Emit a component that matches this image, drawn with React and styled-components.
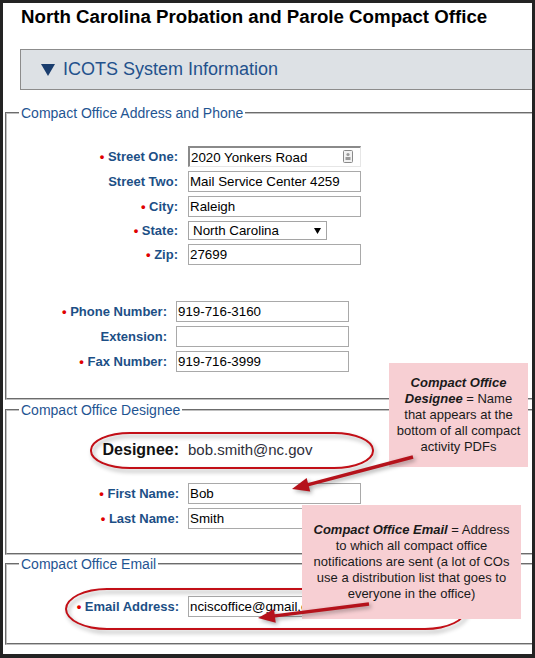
import styled, { createGlobalStyle } from 'styled-components';

const GlobalStyle = createGlobalStyle`
    body {
        margin: 0;
        background: #fff;
        font-family: "Liberation Sans", Arial, sans-serif;
    }
`;

const Frame = styled.div`
    position: relative;
    width: 535px;
    height: 658px;
    box-sizing: border-box;
    border: solid #232323;
    border-width: 3px 3px 4px 3px;
    background: #fff;
    overflow: hidden;
`;

const Page = styled.div`
    width: 600px;
    padding-top: 3px;
`;

const Title = styled.h1`
    margin: 0 0 0 18px;
    font-size: 18.7px;
    line-height: 22px;
    font-weight: bold;
    color: #000;
`;

const SectionBar = styled.div`
    margin: 21px 0 0 17px;
    height: 39px;
    border: 1px solid #8c8c8c;
    background: #dde1e5;
    display: flex;
    align-items: center;
    gap: 8px;
    padding-left: 20px;
    font-size: 18px;
    color: #23518c;
`;

const Group = styled.fieldset`
    margin: ${props => props.$gap}px 0 0 2px;
    padding: ${props => props.$padTop}px 12px ${props => props.$padBottom}px;
    border: 2px groove #c0c0c0;
    min-width: 0;
`;

const Legend = styled.legend`
    padding: 0 2px;
    font-size: 14px;
    line-height: 16px;
    color: #1f5592;
`;

const FormGrid = styled.div`
    display: grid;
    grid-template-columns: ${props => props.$labelWidth}px 173px;
    column-gap: ${props => props.$gap}px;
    row-gap: 4px;
    align-items: center;
    margin-top: ${props => props.$top || 0}px;
`;

const Label = styled.label`
    text-align: right;
    font-size: 13px;
    line-height: 15px;
    font-weight: bold;
    color: #1c4f86;
    white-space: nowrap;
`;

const Bullet = styled.span`
    color: #e00000;
`;

const TextInput = styled.input`
    display: block;
    width: 173px;
    height: 21px;
    box-sizing: border-box;
    margin: 0;
    padding: 0 1px;
    border: 1px solid #a9a9a9;
    border-width: ${props => (props.$inset ? '2px 1px 1px 2px' : '1px')};
    border-color: ${props =>
        props.$inset ? '#8a8a8a #e6e6e6 #e6e6e6 #8a8a8a' : '#a9a9a9'};
    background: #fff;
    font-family: "Liberation Sans", Arial, sans-serif;
    font-size: 13.33px;
    color: #000;
    outline: none;
`;

const InputWrap = styled.div`
    position: relative;
    width: 173px;
`;

const FillIcon = styled.svg`
    position: absolute;
    right: 8px;
    top: 4px;
`;

const SelectWrap = styled.div`
    position: relative;
    width: 139px;
    height: 19px;
`;

const StateSelect = styled.select`
    appearance: none;
    width: 139px;
    height: 19px;
    box-sizing: border-box;
    margin: 0;
    padding: 0 0 0 4px;
    border: 1px solid #a5a5a5;
    border-radius: 0;
    background: #fff;
    font-family: "Liberation Sans", Arial, sans-serif;
    font-size: 13.33px;
    color: #000;
`;

const SelectArrow = styled.svg`
    position: absolute;
    right: 6px;
    top: 7px;
`;

const DesigneeRow = styled.div`
    display: grid;
    grid-template-columns: 160px auto;
    column-gap: 9px;
    align-items: baseline;
    height: 20px;
`;

const DesigneeLabel = styled.span`
    text-align: right;
    font-size: 16px;
    line-height: 20px;
    font-weight: bold;
    color: #111;
`;

const DesigneeValue = styled.span`
    font-size: 15px;
    line-height: 20px;
    color: #2e2e3a;
`;

/* annotation overlay, in whole-frame coordinates */
const Annotations = styled.div`
    position: absolute;
    top: -3px;
    left: -3px;
    width: 535px;
    height: 658px;
    pointer-events: none;
`;

const Ring = styled.div`
    position: absolute;
    left: ${props => props.$x}px;
    top: ${props => props.$y}px;
    width: ${props => props.$w}px;
    height: ${props => props.$h}px;
    box-sizing: border-box;
    border: 2.5px solid #c20f17;
    border-radius: ${props => props.$radius};
    filter: drop-shadow(2px 3px 2px rgba(0, 0, 0, 0.35));
`;

const Callout = styled.div`
    position: absolute;
    left: ${props => props.$x}px;
    top: ${props => props.$y}px;
    width: ${props => props.$w}px;
    height: ${props => props.$h}px;
    background: #f7cfd3;
    display: flex;
    align-items: center;
    justify-content: center;
    text-align: center;
    font-size: 13px;
    line-height: 16px;
    color: #1a1a1a;
`;

const Term = styled.b`
    font-style: italic;
`;

const ArrowLayer = styled.svg`
    position: absolute;
    top: 0;
    left: 0;
    filter: drop-shadow(2px 2px 2px rgba(0, 0, 0, 0.35));
`;

const Arrow = ({ from, to }) => {
    const dx = to[0] - from[0];
    const dy = to[1] - from[1];
    const len = Math.hypot(dx, dy);
    const ux = dx / len;
    const uy = dy / len;
    const bx = to[0] - ux * 17;
    const by = to[1] - uy * 17;
    const head = [
        [to[0], to[1]],
        [bx - uy * 7, by + ux * 7],
        [bx + uy * 7, by - ux * 7],
    ]
        .map(p => p.join(','))
        .join(' ');
    return (
        <g fill="#b5121b" stroke="#b5121b">
            <line
                x1={from[0]}
                y1={from[1]}
                x2={bx + ux * 2}
                y2={by + uy * 2}
                strokeWidth="3.5"
            />
            <polygon points={head} strokeWidth="0" />
        </g>
    );
};

const Field = ({ label, required, children }) => (
    <>
        <Label>
            {required && <Bullet>•</Bullet>}
            {required && ' '}
            {label}:
        </Label>
        {children}
    </>
);

function App() {
    return (
        <Frame>
            <GlobalStyle />
            <Page>
                <Title>North Carolina Probation and Parole Compact Office</Title>
                <SectionBar>
                    <svg width="14" height="12" viewBox="0 0 14 12">
                        <polygon points="0,0 14,0 7,12" fill="#1a3d6e" />
                    </svg>
                    ICOTS System Information
                </SectionBar>

                <Group $gap={15} $padTop={25} $padBottom={26}>
                    <Legend>Compact Office Address and Phone</Legend>
                    <FormGrid $labelWidth={159} $gap={10}>
                        <Field label="Street One" required>
                            <InputWrap>
                                <TextInput $inset defaultValue="2020 Yonkers Road" />
                                <FillIcon width="10" height="13" viewBox="0 0 10 13">
                                    <rect x="0.5" y="0.5" width="9" height="12" rx="1" fill="#f2f2f2" stroke="#8a8a8a" />
                                    <circle cx="5" cy="4.5" r="1.6" fill="#9a9a9a" />
                                    <rect x="2.5" y="7" width="5" height="3" fill="#9a9a9a" />
                                </FillIcon>
                            </InputWrap>
                        </Field>
                        <Field label="Street Two">
                            <TextInput defaultValue="Mail Service Center 4259" />
                        </Field>
                        <Field label="City" required>
                            <TextInput defaultValue="Raleigh" />
                        </Field>
                        <Field label="State" required>
                            <SelectWrap>
                                <StateSelect defaultValue="NC">
                                    <option value="NC">North Carolina</option>
                                </StateSelect>
                                <SelectArrow width="7" height="6" viewBox="0 0 7 6">
                                    <polygon points="0,0 7,0 3.5,6" fill="#000" />
                                </SelectArrow>
                            </SelectWrap>
                        </Field>
                        <Field label="Zip" required>
                            <TextInput defaultValue="27699" />
                        </Field>
                    </FormGrid>
                    <FormGrid $labelWidth={148} $gap={9} $top={36}>
                        <Field label="Phone Number" required>
                            <TextInput defaultValue="919-716-3160" />
                        </Field>
                        <Field label="Extension">
                            <TextInput defaultValue="" />
                        </Field>
                        <Field label="Fax Number" required>
                            <TextInput defaultValue="919-716-3999" />
                        </Field>
                    </FormGrid>
                </Group>

                <Group $gap={2} $padTop={22} $padBottom={24}>
                    <Legend>Compact Office Designee</Legend>
                    <DesigneeRow>
                        <DesigneeLabel>Designee:</DesigneeLabel>
                        <DesigneeValue>bob.smith@nc.gov</DesigneeValue>
                    </DesigneeRow>
                    <FormGrid $labelWidth={160} $gap={9} $top={23}>
                        <Field label="First Name" required>
                            <TextInput defaultValue="Bob" />
                        </Field>
                        <Field label="Last Name" required>
                            <TextInput defaultValue="Smith" />
                        </Field>
                    </FormGrid>
                </Group>

                <Group $gap={1} $padTop={24} $padBottom={26}>
                    <Legend>Compact Office Email</Legend>
                    <FormGrid $labelWidth={160} $gap={9}>
                        <Field label="Email Address" required>
                            <TextInput defaultValue="nciscoffice@gmail.com" />
                        </Field>
                    </FormGrid>
                </Group>
            </Page>

            <Annotations>
                <Ring $x={90} $y={432} $w={284} $h={37} $radius="40px / 18px" />
                <Ring $x={65} $y={588} $w={402} $h={42} $radius="42px / 21px" />
                <Callout $x={389} $y={363} $w={139} $h={104}>
                    <div>
                        <Term>Compact Office</Term>
                        <br />
                        <Term>Designee</Term> = Name
                        <br />
                        that appears at the
                        <br />
                        bottom of all compact
                        <br />
                        activity PDFs
                    </div>
                </Callout>
                <Callout $x={302} $y={505} $w={219} $h={114}>
                    <div>
                        <Term>Compact Office Email</Term> = Address
                        <br />
                        to which all compact office
                        <br />
                        notifications are sent (a lot of COs
                        <br />
                        use a distribution list that goes to
                        <br />
                        everyone in the office)
                    </div>
                </Callout>
                <ArrowLayer width="535" height="658">
                    <Arrow from={[413, 457]} to={[292, 489]} />
                    <Arrow from={[369, 604]} to={[258, 618]} />
                </ArrowLayer>
            </Annotations>
        </Frame>
    );
}

export default App;
